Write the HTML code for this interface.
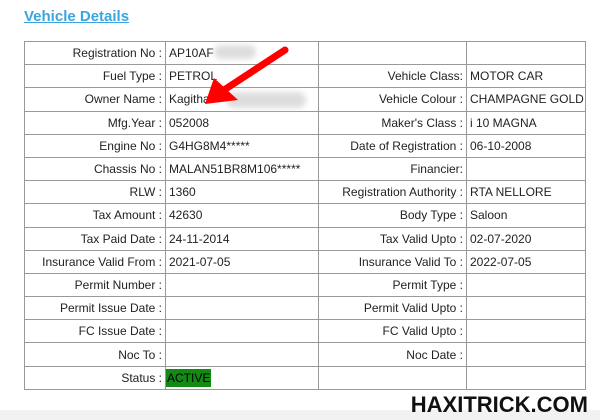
<!DOCTYPE html>
<html><head><meta charset="utf-8"><style>
body{margin:0;width:600px;height:420px;background:#fff;position:relative;overflow:hidden;font-family:"Liberation Sans",sans-serif;}
.t{position:absolute;left:24px;top:8px;font-size:15px;font-weight:bold;color:#3ba5e0;text-decoration:underline;}
table{position:absolute;left:24px;top:41px;border-collapse:collapse;font-size:12px;color:#222;table-layout:fixed;width:561px;}
td{border:1px solid #999;height:22.2px;padding:0 3px;white-space:nowrap;overflow:hidden;}
td.l,td.l2{text-align:right}
.act{background:#138a13;color:#000;padding:2px 1px;}
.band{position:absolute;left:0;top:410px;width:600px;height:10px;background:#f2f2f2}
.wm{position:absolute;right:12px;top:392px;font-size:22px;font-weight:bold;color:#111;}
.blur{position:absolute;background:#ddd;border-radius:10px;filter:blur(3px)}
</style></head><body>
<div class="t">Vehicle Details</div>
<table>
<colgroup><col style="width:141px"><col style="width:153px"><col style="width:148px"><col style="width:119px"></colgroup>
<tr><td class="l">Registration No :</td><td class="v">AP10AF</td><td class="l2"></td><td class="v2"></td></tr>
<tr><td class="l">Fuel Type :</td><td class="v">PETROL</td><td class="l2">Vehicle Class:</td><td class="v2">MOTOR CAR</td></tr>
<tr><td class="l">Owner Name :</td><td class="v">Kagitha</td><td class="l2">Vehicle Colour :</td><td class="v2">CHAMPAGNE GOLD</td></tr>
<tr><td class="l">Mfg.Year :</td><td class="v">052008</td><td class="l2">Maker's Class :</td><td class="v2">i 10 MAGNA</td></tr>
<tr><td class="l">Engine No :</td><td class="v">G4HG8M4*****</td><td class="l2">Date of Registration :</td><td class="v2">06-10-2008</td></tr>
<tr><td class="l">Chassis No :</td><td class="v">MALAN51BR8M106*****</td><td class="l2">Financier:</td><td class="v2"></td></tr>
<tr><td class="l">RLW :</td><td class="v">1360</td><td class="l2">Registration Authority :</td><td class="v2">RTA NELLORE</td></tr>
<tr><td class="l">Tax Amount :</td><td class="v">42630</td><td class="l2">Body Type :</td><td class="v2">Saloon</td></tr>
<tr><td class="l">Tax Paid Date :</td><td class="v">24-11-2014</td><td class="l2">Tax Valid Upto :</td><td class="v2">02-07-2020</td></tr>
<tr><td class="l">Insurance Valid From :</td><td class="v">2021-07-05</td><td class="l2">Insurance Valid To :</td><td class="v2">2022-07-05</td></tr>
<tr><td class="l">Permit Number :</td><td class="v"></td><td class="l2">Permit Type :</td><td class="v2"></td></tr>
<tr><td class="l">Permit Issue Date :</td><td class="v"></td><td class="l2">Permit Valid Upto :</td><td class="v2"></td></tr>
<tr><td class="l">FC Issue Date :</td><td class="v"></td><td class="l2">FC Valid Upto :</td><td class="v2"></td></tr>
<tr><td class="l">Noc To :</td><td class="v"></td><td class="l2">Noc Date :</td><td class="v2"></td></tr>
<tr><td class="l">Status :</td><td class="v" style="padding:0"><span class="act">ACTIVE</span></td><td class="l2"></td><td class="v2"></td></tr>
</table>
<div class="blur" style="left:214px;top:45px;width:42px;height:14px"></div>
<div class="blur" style="left:226px;top:92px;width:80px;height:16px"></div>
<svg style="position:absolute;left:0;top:0" width="600" height="420">
<line x1="285" y1="50" x2="224" y2="90" stroke="#f00" stroke-width="7" stroke-linecap="round"/>
<polygon points="205,104 214,78 238,100" fill="#f00"/>
</svg>
<div class="band"></div>
<div class="wm">HAXITRICK.COM</div>
</body></html>
